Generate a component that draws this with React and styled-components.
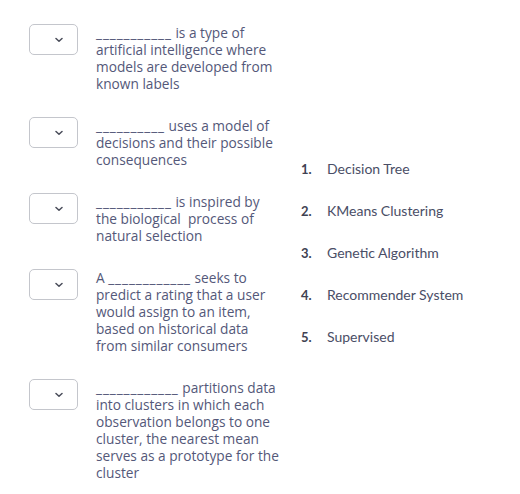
import React from "react";
import styled, { createGlobalStyle } from "styled-components";

const Global = createGlobalStyle`
  html, body { margin: 0; padding: 0; background: #ffffff; }
  body { font-family: "Open Sans", "Noto Sans", sans-serif; }
`;

const Page = styled.div`
  display: flex;
  align-items: center;
  gap: 20px;
  padding: 24px 0 0 29px;
`;

const Questions = styled.div`
  display: flex;
  flex-direction: column;
  gap: 25px;
  width: 252px;
`;

const Question = styled.div`
  display: flex;
  align-items: flex-start;
  gap: 18px;
`;

const SelectBox = styled.div`
  box-sizing: border-box;
  width: 49px;
  height: 31px;
  flex: none;
  border: 1px solid #c4c6cc;
  border-radius: 5px;
  background: #fff;
  display: flex;
  align-items: center;
  justify-content: flex-end;
  padding-right: 14px;
`;

const Prompt = styled.div`
  font-family: "Open Sans", "Noto Sans", sans-serif;
  font-size: 13.7px;
  line-height: 17px;
  color: #545879;
`;

const Line = styled.div`
  white-space: pre;
`;

const Blank = styled.span`
  letter-spacing: ${(p) => p.$spacing}px;
`;

const Answers = styled.ol`
  list-style: none;
  margin: 0;
  padding: 0;
  display: flex;
  flex-direction: column;
  gap: 25px;
`;

const Answer = styled.li`
  display: block;
  height: 17px;
  font-family: Lato, "Open Sans", sans-serif;
  font-size: 14px;
  line-height: 17px;
  color: #4a4e66;
  white-space: nowrap;
`;

const Num = styled.span`
  display: inline-block;
  width: 26px;
  font-weight: 700;
  font-size: 13px;
  line-height: 17px;
  color: #3f4252;
`;

const Chevron = () => (
  <svg width="8" height="6" viewBox="0 0 8 6" aria-hidden="true">
    <path d="M1 1.5 L4 4.3 L7 1.5" fill="none" stroke="#4a4d5a" strokeWidth="1.5" strokeLinecap="round" strokeLinejoin="round" />
  </svg>
);

const questions = [
  { pre: "", n: 11, first: " is a type of", lines: ["artificial intelligence where", "models are developed from", "known labels"] },
  { pre: "", n: 10, first: " uses a model of", lines: ["decisions and their possible", "consequences"] },
  { pre: "", n: 11, first: " is inspired by", lines: ["the biological  process of", "natural selection"] },
  { pre: "A ", n: 12, first: " seeks to", lines: ["predict a rating that a user", "would assign to an item,", "based on historical data", "from similar consumers"] },
  { pre: "", n: 12, first: " partitions data", lines: ["into clusters in which each", "observation belongs to one", "cluster, the nearest mean", "serves as a prototype for the", "cluster"] },
];

const answers = ["Decision Tree", "KMeans Clustering", "Genetic Algorithm", "Recommender System", "Supervised"];

export default function App() {
  return (
    <>
      <Global />
      <Page>
        <Questions>
          {questions.map((q, i) => (
            <Question key={i}>
              <SelectBox>
                <Chevron />
              </SelectBox>
              <Prompt>
                <Line>
                  {q.pre}
                  <Blank $spacing={0.9}>{"_".repeat(q.n)}</Blank>
                  {q.first}
                </Line>
                <Line>{q.lines.join("\n")}</Line>
              </Prompt>
            </Question>
          ))}
        </Questions>
        <Answers>
          {answers.map((a, i) => (
            <Answer key={a}>
              <Num>{i + 1}.</Num>
              {a}
            </Answer>
          ))}
        </Answers>
      </Page>
    </>
  );
}
